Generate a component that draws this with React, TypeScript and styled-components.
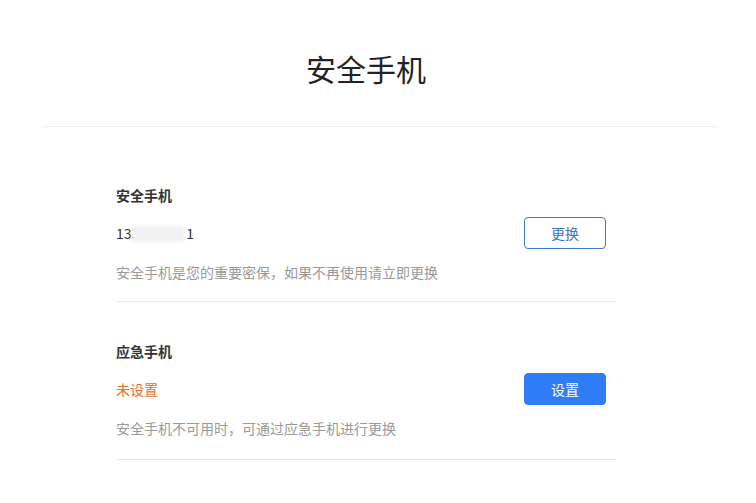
import React from 'react';
import styled, { createGlobalStyle } from 'styled-components';

const GlobalStyle = createGlobalStyle`
  html, body {
    margin: 0;
    padding: 0;
    background: #ffffff;
  }
  body {
    font-family: "Noto Sans CJK SC", "Noto Sans", "Liberation Sans", sans-serif;
    color: #333333;
  }
`;

const Page = styled.div`
  width: 756px;
  min-height: 503px;
  background: #ffffff;
`;

const Header = styled.header`
  margin-left: 42px;
  width: 676px;
  padding: 48px 0 38px;
  border-bottom: 1px solid #eeeeee;
  text-align: center;
`;

const Title = styled.h1`
  margin: 0 28px 0 0;
  font-size: 30px;
  line-height: 40px;
  font-weight: 400;
  color: #222222;
`;

const Content = styled.main`
  width: 500px;
  margin-left: 116px;
  padding-top: 18px;
`;

const Section = styled.section`
  display: flex;
  flex-direction: column;
  padding: 40px 0 19px;
  border-bottom: 1px solid #e8e8e8;

  & + & {
    padding: 39px 0 21px;
  }
`;

const SectionTitle = styled.h2`
  margin: 0;
  font-size: 14px;
  line-height: 20px;
  font-weight: 700;
  color: #333333;
`;

const ValueRow = styled.div`
  display: flex;
  align-items: center;
  justify-content: space-between;
  margin: 12px 0 13px;
  padding-right: 10px;
`;

const Value = styled.span<{ $warn?: boolean }>`
  font-size: 14px;
  line-height: 20px;
  color: ${(p) => (p.$warn ? '#e06f30' : '#333333')};
`;

const Mask = styled.span`
  display: inline-block;
  width: 52px;
  height: 16px;
  margin: 0 2px -3px -7px;
  background: #f1f2f3;
  filter: blur(1.5px);
`;

const Button = styled.button<{ $primary?: boolean }>`
  width: 82px;
  height: 32px;
  border-radius: 4px;
  font-family: inherit;
  font-size: 14px;
  cursor: pointer;
  border: 1px solid ${(p) => (p.$primary ? '#2f7df6' : '#3e78c8')};
  background: ${(p) => (p.$primary ? '#2f7df6' : '#ffffff')};
  color: ${(p) => (p.$primary ? '#ffffff' : '#3a72c4')};
`;

const Desc = styled.p`
  margin: 0;
  font-size: 14px;
  line-height: 20px;
  color: #999999;
`;

export default function App() {
  return (
    <Page>
      <GlobalStyle />
      <Header>
        <Title>安全手机</Title>
      </Header>
      <Content>
        <Section>
          <SectionTitle>安全手机</SectionTitle>
          <ValueRow>
            <Value>
              133<Mask />1
            </Value>
            <Button>更换</Button>
          </ValueRow>
          <Desc>安全手机是您的重要密保，如果不再使用请立即更换</Desc>
        </Section>
        <Section>
          <SectionTitle>应急手机</SectionTitle>
          <ValueRow>
            <Value $warn>未设置</Value>
            <Button $primary>设置</Button>
          </ValueRow>
          <Desc>安全手机不可用时，可通过应急手机进行更换</Desc>
        </Section>
      </Content>
    </Page>
  );
}
